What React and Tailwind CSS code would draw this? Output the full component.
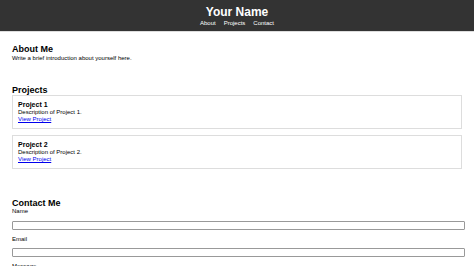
export default function App() {
  return (
    <div className="min-h-[266px] bg-white text-black" style={{ fontFamily: '"Liberation Sans", Arial, sans-serif' }}>
      <header className="bg-[#333] text-white text-center h-[32px] pt-[6px] border-b border-[#ddd]">
        <h1 className="text-[12px] font-bold leading-[13px]">Your Name</h1>
        <nav className="text-[6px] leading-[8px] flex justify-center gap-[8px]">
          <a href="#about">About</a>
          <a href="#projects">Projects</a>
          <a href="#contact">Contact</a>
        </nav>
      </header>
      <main className="px-[12px]">
        <section className="pt-[12px]">
          <h2 className="text-[9px] font-bold leading-[11px]">About Me</h2>
          <p className="text-[6px] leading-[7px]">Write a brief introduction about yourself here.</p>
        </section>
        <section className="pt-[23px]">
          <h2 className="text-[9px] font-bold leading-[10px]">Projects</h2>
          <div className="flex flex-col gap-[6px]">
            <div className="border border-[#ddd] px-[5px] pt-[5px] pb-[5px]">
              <h3 className="text-[7px] font-bold leading-[8px]">Project 1</h3>
              <p className="text-[6px] leading-[7px]">Description of Project 1.</p>
              <a href="#" className="text-[6px] leading-[7px] text-[#00e] underline block">View Project</a>
            </div>
            <div className="border border-[#ddd] px-[5px] pt-[5px] pb-[5px]">
              <h3 className="text-[7px] font-bold leading-[8px]">Project 2</h3>
              <p className="text-[6px] leading-[7px]">Description of Project 2.</p>
              <a href="#" className="text-[6px] leading-[7px] text-[#00e] underline block">View Project</a>
            </div>
          </div>
        </section>
        <section className="pt-[29px]">
          <h2 className="text-[9px] font-bold leading-[10px]">Contact Me</h2>
          <form className="text-[6px] leading-[7px] mr-[-3px]">
            <label className="block">Name</label>
            <input className="block w-full h-[9px] border border-[#999] rounded-[1px] mt-[6px] mb-[6px]" />
            <label className="block">Email</label>
            <input className="block w-full h-[9px] border border-[#999] rounded-[1px] mt-[5px] mb-[6px]" />
            <label className="block">Message</label>
          </form>
        </section>
      </main>
    </div>
  );
}
